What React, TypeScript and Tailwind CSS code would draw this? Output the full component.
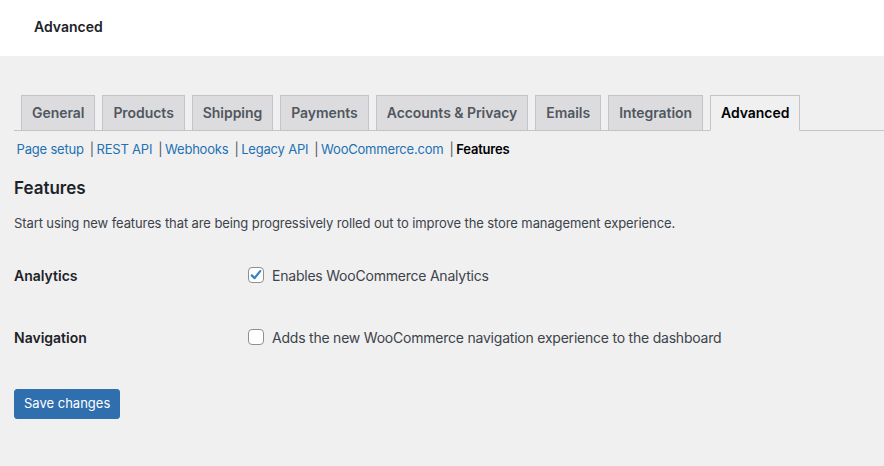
import { useState } from 'react'

const tabs = ['General', 'Products', 'Shipping', 'Payments', 'Accounts & Privacy', 'Emails', 'Integration', 'Advanced']
const sections = ['Page setup', 'REST API', 'Webhooks', 'Legacy API', 'WooCommerce.com']

function Checkbox({ checked, onChange }: { checked: boolean; onChange: () => void }) {
  return (
    <button
      type="button"
      onClick={onChange}
      className="w-4 h-4 shrink-0 rounded-[4px] border border-[#8c8f94] bg-white flex items-center justify-center"
    >
      {checked && (
        <svg width="16" height="16" viewBox="0 0 20 20" fill="none">
          <path d="M4 10.5l4 4 8-10" stroke="#3582c4" strokeWidth="3.2" strokeLinecap="round" strokeLinejoin="round" />
        </svg>
      )}
    </button>
  )
}

export default function App() {
  const [analytics, setAnalytics] = useState(true)
  const [navigation, setNavigation] = useState(false)

  return (
    <div className="min-h-screen bg-[#f0f0f1] font-['Inter',sans-serif] text-[#3c434a]">
      <div className="h-14 bg-white flex items-center pl-[34px] pb-[4px]">
        <h1 className="text-[14px] font-semibold text-[#1d2327]">Advanced</h1>
      </div>

      <div className="pl-[14px]">
        <nav className="mt-[39px] flex border-b border-[#c3c4c7]">
          {tabs.map((t) => {
            const active = t === 'Advanced'
            return (
              <a
                key={t}
                href="#"
                className={
                  active
                    ? 'ml-[7px] -mb-px px-[10px] py-[5px] leading-6 text-[14px] font-semibold tracking-[-0.05px] border border-[#c3c4c7] border-b-[#f0f0f1] bg-[#f0f0f1] text-black'
                    : 'ml-[7px] -mb-px px-[10px] py-[5px] leading-6 text-[14px] font-semibold tracking-[-0.05px] border border-[#c3c4c7] bg-[#dcdcde] text-[#50575e]'
                }
              >
                {t}
              </a>
            )
          })}
        </nav>

        <ul className="mt-[5px] flex text-[13px] leading-[26px] tracking-[-0.2px] text-[#50575e]">
          {sections.map((s) => (
            <li key={s}>
              <a href="#" className="px-[2.6px] text-[#2271b1]">{s}</a> |
            </li>
          ))}
          <li>
            <span className="px-[2.6px] font-semibold text-black">Features</span>
          </li>
        </ul>

        <h2 className="mt-[14px] text-[17px] leading-6 font-semibold text-[#1d2327]">Features</h2>
        <p className="mt-[13px] text-[13px] leading-5 tracking-[-0.1px]">
          Start using new features that are being progressively rolled out to improve the store management experience.
        </p>

        <div className="mt-[11px]">
          <div className="h-[62px] flex items-center">
            <div className="w-[234px] text-[14px] font-semibold text-[#1d2327]">Analytics</div>
            <label className="flex items-center gap-2 text-[14px] tracking-[-0.22px]">
              <Checkbox checked={analytics} onChange={() => setAnalytics(!analytics)} />
              Enables WooCommerce Analytics
            </label>
          </div>
          <div className="h-[62px] flex items-center">
            <div className="w-[234px] text-[14px] font-semibold text-[#1d2327]">Navigation</div>
            <label className="flex items-center gap-2 text-[14px] tracking-[-0.22px]">
              <Checkbox checked={navigation} onChange={() => setNavigation(!navigation)} />
              Adds the new WooCommerce navigation experience to the dashboard
            </label>
          </div>
        </div>

        <button
          type="button"
          className="mt-[21px] h-[30px] px-[9px] rounded-[3px] border border-[#2f6fae] bg-[#2f6fae] text-white text-[13px]"
        >
          Save changes
        </button>
      </div>
    </div>
  )
}
